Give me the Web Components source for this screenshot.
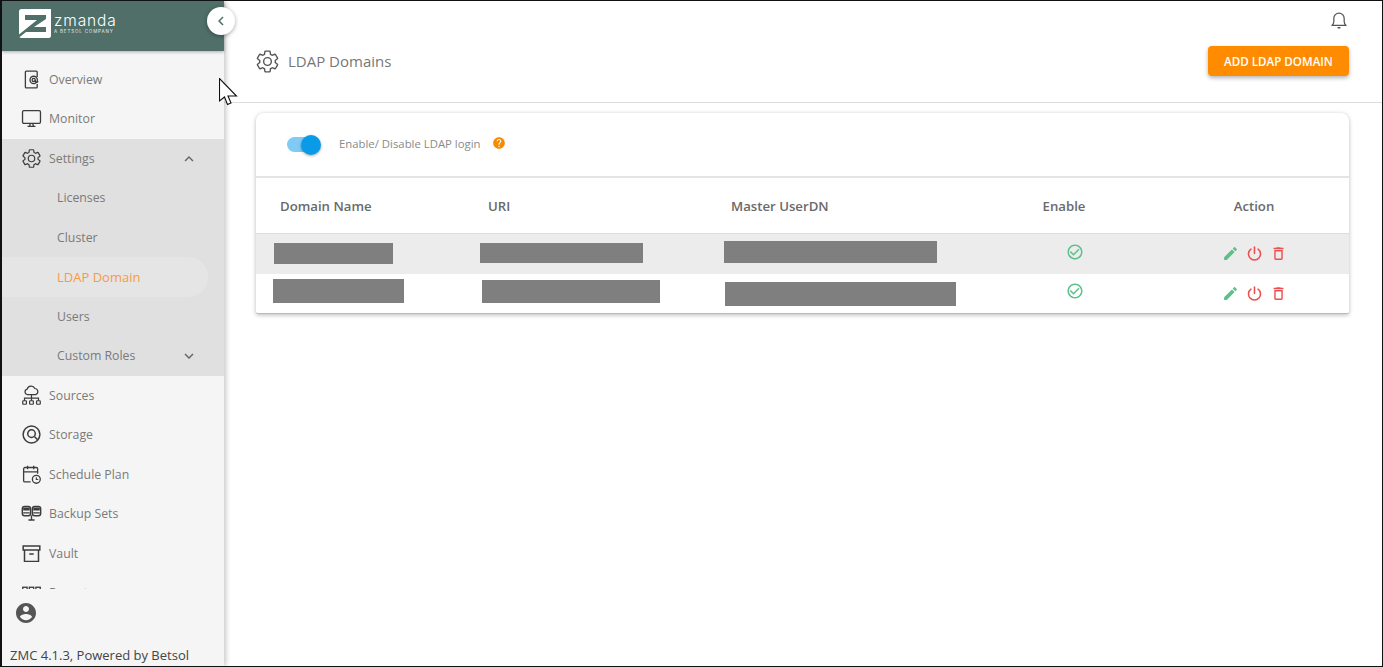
<!DOCTYPE html>
<html lang="en">
<head>
<meta charset="utf-8">
<title>LDAP Domains</title>
<style>
  html, body { margin: 0; height: 100%; overflow: hidden; background: #fff; }
  body { font-family: "Open Sans", "Liberation Sans", sans-serif; }
</style>
</head>
<body>
<app-shell>
  <side-bar slot="side">
    <nav-item icon="overview">Overview</nav-item>
    <nav-item icon="monitor">Monitor</nav-item>
    <nav-group>
      <nav-item icon="gear" chevron="up">Settings</nav-item>
      <nav-item sub>Licenses</nav-item>
      <nav-item sub>Cluster</nav-item>
      <nav-item sub active>LDAP Domain</nav-item>
      <nav-item sub>Users</nav-item>
      <nav-item sub chevron="down">Custom Roles</nav-item>
    </nav-group>
    <nav-item icon="sources">Sources</nav-item>
    <nav-item icon="storage">Storage</nav-item>
    <nav-item icon="schedule">Schedule Plan</nav-item>
    <nav-item icon="backup">Backup Sets</nav-item>
    <nav-item icon="vault">Vault</nav-item>
    <nav-item icon="reports">Reports</nav-item>
  </side-bar>
  <page-header slot="head" title-text="LDAP Domains" action="ADD LDAP DOMAIN"></page-header>
  <ldap-card slot="main"></ldap-card>
</app-shell>

<script>
const ICONS = {
  gear: '<g fill="none" stroke="currentColor" stroke-width="1.35"><path d="M19.43 12.98c.04-.32.07-.64.07-.98 0-.34-.03-.66-.07-.98l2.11-1.65c.19-.15.24-.42.12-.64l-2-3.46c-.09-.16-.26-.25-.44-.25-.06 0-.12.01-.17.03l-2.49 1c-.52-.4-1.08-.73-1.69-.98l-.38-2.65C14.46 2.18 14.25 2 14 2h-4c-.25 0-.46.18-.49.42l-.38 2.65c-.61.25-1.17.59-1.69.98l-2.49-1c-.06-.02-.12-.03-.18-.03-.17 0-.34.09-.43.25l-2 3.46c-.13.22-.07.49.12.64l2.11 1.65c-.04.32-.07.65-.07.98 0 .33.03.66.07.98l-2.11 1.65c-.19.15-.24.42-.12.64l2 3.46c.09.16.26.25.44.25.06 0 .12-.01.17-.03l2.49-1c.52.4 1.08.73 1.69.98l.38 2.65c.03.24.24.42.49.42h4c.25 0 .46-.18.49-.42l.38-2.65c.61-.25 1.17-.59 1.69-.98l2.49 1c.06.02.12.03.18.03.17 0 .34-.09.43-.25l2-3.46c.12-.22.07-.49-.12-.64l-2.11-1.65z"/><circle cx="12" cy="12" r="3.7"/></g>',
  overview: '<g fill="none" stroke="currentColor" stroke-width="1.5"><path d="M6 2.500h11.500a1 1 0 0 1 1 1v5.500M18.500 17v3.500a1 1 0 0 1-1 1H6a1 1 0 0 1-1-1v-17a1 1 0 0 1 1-1"/><circle cx="14.500" cy="12.500" r="1.800"/><circle cx="14.500" cy="12.500" r="4.200"/><path d="M16.300 12.500v1.300a1.500 1.500 0 0 0 3 0"/></g>',
  monitor: '<g fill="none" stroke="currentColor" stroke-width="1.500"><rect x="1.750" y="3" width="20.500" height="14.500" rx="1.500"/><path d="M10.500 17.500l-.5 3M13.500 17.500l.5 3M7.500 21h9"/></g>',
  sources: '<g fill="none" stroke="currentColor" stroke-width="1.400"><path d="M7.500 11a3.200 3.200 0 0 1-.4-6.300A4.600 4.600 0 0 1 15.800 4a3.600 3.600 0 0 1 1 7z"/><path d="M12 11v4M4 18v-3h16v3M12 15v3"/><rect x="2" y="18" width="4.200" height="4" rx=".6"/><rect x="9.900" y="18" width="4.200" height="4" rx=".6"/><rect x="17.800" y="18" width="4.200" height="4" rx=".6"/></g>',
  storage: '<g fill="none" stroke="currentColor" stroke-width="1.700"><circle cx="12" cy="12" r="9.600"/><circle cx="12" cy="11" r="4.300"/><path d="M15.500 14.500l3.500 3.500"/></g>',
  schedule: '<g fill="none" stroke="currentColor" stroke-width="1.500"><path d="M11 20.500H4.500a1.500 1.500 0 0 1-1.500-1.500V5.500A1.500 1.500 0 0 1 4.500 4h13A1.500 1.500 0 0 1 19 5.500V11"/><path d="M3 9h16M7.500 2v4M14.500 2v4"/><circle cx="17.500" cy="17.500" r="4.500"/><path d="M17.500 15v2.700h2.200" stroke-width="1.200"/></g>',
  backup: '<g fill="none" stroke="currentColor" stroke-width="1.600"><path d="M12 14v6M8.500 19.500h7"/><rect x="1.500" y="4" width="9.500" height="10.500" rx="2.500"/><rect x="13" y="4" width="9.500" height="10.500" rx="2.500"/></g><path fill="currentColor" d="M2.500 5h7.500v3.500H2.500zM14 5h7.500v3.500H14zM2.500 10.500h7.500v1.500H2.500zM14 10.500h7.500v1.500H14z"/>',
  vault: '<g fill="none" stroke="currentColor" stroke-width="1.700"><path d="M2.500 3.500h19v4.500h-19zM4 8v13h16V8M9.500 12.500h5"/></g>',
  reports: '<g fill="none" stroke="currentColor" stroke-width="1.500"><rect x="2" y="6" width="5" height="8"/><rect x="9.500" y="6" width="5" height="8"/><rect x="17" y="6" width="5" height="8"/></g>',
  up: '<path fill="currentColor" d="M12 8l-6 6 1.410 1.410L12 10.830l4.590 4.580L18 14z"/>',
  down: '<path fill="currentColor" d="M16.590 8.590L12 13.170 7.410 8.590 6 10l6 6 6-6z"/>',
  left: '<path fill="currentColor" d="M15.410 7.410L14 6l-6 6 6 6 1.410-1.410L10.830 12z"/>',
  user: '<path fill="currentColor" d="M12 2C6.480 2 2 6.480 2 12s4.480 10 10 10 10-4.480 10-10S17.520 2 12 2zm0 3c1.660 0 3 1.340 3 3s-1.340 3-3 3-3-1.340-3-3 1.340-3 3-3zm0 14.200c-2.500 0-4.710-1.280-6-3.220.030-1.990 4-3.080 6-3.080 1.990 0 5.970 1.090 6 3.080-1.290 1.940-3.500 3.220-6 3.220z"/>',
  bell: '<g fill="none" stroke="currentColor" stroke-width="1.500" stroke-linejoin="round"><path d="M3.500 18.500c1.500-1.300 2.300-2.600 2.300-4.800V10a6.200 6.200 0 0 1 12.400 0v3.700c0 2.200.8 3.500 2.300 4.800z"/></g><path fill="currentColor" d="M10 20.500h4a2 2 0 0 1-4 0z"/>',
  check: '<path fill="currentColor" d="M16.590 7.580L10 14.170l-3.590-3.580L5 12l5 5 8-8zM12 2C6.480 2 2 6.480 2 12s4.480 10 10 10 10-4.480 10-10S17.520 2 12 2zm0 18c-4.420 0-8-3.580-8-8s3.580-8 8-8 8 3.580 8 8-3.580 8-8 8z"/>',
  edit: '<path fill="currentColor" d="M3 17.250V21h3.750L17.810 9.940l-3.750-3.750L3 17.250zM20.710 7.040c.39-.39.39-1.020 0-1.410l-2.340-2.340c-.39-.39-1.020-.39-1.410 0l-1.830 1.830 3.750 3.750 1.830-1.830z"/>',
  power: '<g fill="none" stroke="currentColor" stroke-width="2.200" stroke-linecap="round"><path d="M12 3v9"/><path d="M7 5.800a8.500 8.500 0 1 0 10 0"/></g>',
  trash: '<path fill="currentColor" d="M6 19c0 1.100.9 2 2 2h8c1.100 0 2-.9 2-2V7H6v12zM8 9h8v10H8V9zm7.500-5l-1-1h-5l-1 1H5v2h14V4z"/>',
  help: '<path fill="currentColor" d="M12 2C6.480 2 2 6.480 2 12s4.480 10 10 10 10-4.480 10-10S17.520 2 12 2zm1 17h-2v-2h2v2zm2.070-7.750l-.9.920C13.450 12.900 13 13.500 13 15h-2v-.5c0-1.100.45-2.100 1.170-2.830l1.240-1.260c.37-.36.59-.86.59-1.410 0-1.100-.9-2-2-2s-2 .9-2 2H8c0-2.210 1.790-4 4-4s4 1.790 4 4c0 .88-.36 1.680-.93 2.250z"/>'
};

class SvgIcon extends HTMLElement {
  connectedCallback() {
    const size = this.getAttribute('size') || 22;
    this.attachShadow({ mode: 'open' }).innerHTML = `
      <style>
        :host { display: inline-flex; flex: none; width: ${size}px; height: ${size}px; }
        svg { width: 100%; height: 100%; display: block; }
      </style>
      <svg viewBox="0 0 24 24">${ICONS[this.getAttribute('name')] || ''}</svg>`;
  }
}
customElements.define('svg-icon', SvgIcon);

class AppShell extends HTMLElement {
  constructor() {
    super();
    this.attachShadow({ mode: 'open' }).innerHTML = `
      <style>
        :host {
          display: flex; box-sizing: border-box; height: 667px; overflow: hidden; position: relative;
          border-style: solid; border-color: #111; border-width: 1px 1px 1px 2px;
        }
        .main { flex: 1; min-width: 0; display: flex; flex-direction: column; }
        .body { padding: 10px 33px 0 32px; }
        svg.cursor { position: absolute; left: 217px; top: 77px; z-index: 5; }
      </style>
      <slot name="side"></slot>
      <div class="main">
        <slot name="head"></slot>
        <div class="body"><slot name="main"></slot></div>
      </div>
      <svg class="cursor" width="19" height="28" viewBox="0 0 19 28">
        <path d="M.5 .5V23L5.500 19 8.500 26.500 12 25 9 18H17.500z" fill="#fff" stroke="#111" stroke-width="1.100"/>
      </svg>`;
  }
}
customElements.define('app-shell', AppShell);

class SideBar extends HTMLElement {
  constructor() {
    super();
    this.attachShadow({ mode: 'open' }).innerHTML = `
      <style>
        :host {
          display: flex; flex-direction: column; flex: none; width: 222px; height: 665px;
          background: #f5f5f5; position: relative; z-index: 2;
          box-shadow: 2px 0 5px rgba(0,0,0,.22);
        }
        .brand {
          flex: none; height: 50px; background: #4f6f68; display: flex; align-items: flex-start;
          gap: 3px; padding-left: 17px; box-sizing: border-box; box-shadow: 0 1px 3px rgba(0,0,0,.3);
          color: #fff; position: relative;
        }
        .brand svg { display: block; margin-top: 8px; }
        .word { display: flex; flex-direction: column; font-family: Inter, "Noto Sans", sans-serif; padding-top: 12px; }
        .word b { font-weight: 300; font-size: 15.500px; line-height: 16px; letter-spacing: .85px; }
        .word small { font-size: 4.500px; line-height: 6px; letter-spacing: .85px; opacity: .85; white-space: nowrap; }
        .toggle {
          position: absolute; left: 205px; top: 6px; width: 28px; height: 28px; border-radius: 50%;
          background: #fff; box-shadow: 0 1px 4px rgba(0,0,0,.35); color: #4f6f68;
          display: flex; align-items: center; justify-content: center;
        }
        .nav { flex: 1; min-height: 0; overflow: hidden; padding-top: 8.500px; }
        .foot { flex: none; height: 77px; color: #444; position: relative; }
        .foot svg-icon { color: #555; position: absolute; left: 12px; top: 12px; }
        .foot p { margin: 0; position: absolute; left: 8px; top: 56px; font-size: 13px; line-height: 20px; white-space: nowrap; }
      </style>
      <div class="brand">
        <svg width="32" height="29" viewBox="0 0 32 29">
          <path fill="#fff" d="M2.500 0H32V26.500A2.500 2.500 0 0 1 29.500 29H2.500A2.500 2.500 0 0 1 0 26.500V2.500A2.500 2.500 0 0 1 2.500 0z"/>
          <path fill="#4f6f68" d="M6 6H27V10L15 18H27V23H7L0 28.500V25.500L18 11H6z"/>
        </svg>
        <div class="word"><b>zmanda</b><small>A BETSOL COMPANY</small></div>
        <div class="toggle"><svg-icon name="left" size="18"></svg-icon></div>
      </div>
      <div class="nav"><slot></slot></div>
      <div class="foot">
        <svg-icon name="user" size="24"></svg-icon>
        <p>ZMC 4.1.3, Powered by Betsol</p>
      </div>`;
  }
}
customElements.define('side-bar', SideBar);

class NavGroup extends HTMLElement {
  constructor() {
    super();
    this.attachShadow({ mode: 'open' }).innerHTML = `
      <style>:host { display: block; background: #e0e0e0; }</style><slot></slot>`;
  }
}
customElements.define('nav-group', NavGroup);

class NavItem extends HTMLElement {
  connectedCallback() {
    const icon = this.getAttribute('icon');
    const chevron = this.getAttribute('chevron');
    this.attachShadow({ mode: 'open' }).innerHTML = `
      <style>
        :host {
          display: flex; align-items: center; box-sizing: border-box; height: 39.500px;
          padding-left: 19px; gap: 7px; font-size: 12.300px; color: #7a7a7a; position: relative;
        }
        :host([sub]) { padding-left: 55px; }
        :host([active]) { color: #f79a45; font-size: 13px; font-weight: 500; }
        :host([active])::before {
          content: ""; position: absolute; left: 0; top: 0; bottom: 0; width: 206px;
          background: #e5e5e5; border-radius: 0 20px 20px 0;
        }
        .ic { color: #3c3c3c; }
        .lb { position: relative; white-space: nowrap; }
        .chev { position: absolute; left: 178px; top: 11px; color: #666; }
      </style>
      ${icon ? `<svg-icon class="ic" name="${icon}" size="21"></svg-icon>` : ''}
      <span class="lb"><slot></slot></span>
      ${chevron ? `<svg-icon class="chev" name="${chevron}" size="18"></svg-icon>` : ''}`;
  }
}
customElements.define('nav-item', NavItem);

class PageHeader extends HTMLElement {
  connectedCallback() {
    this.attachShadow({ mode: 'open' }).innerHTML = `
      <style>
        :host { display: block; flex: none; height: 102px; box-sizing: border-box; border-bottom: 1px solid #ddd; }
        .top { display: flex; justify-content: flex-end; padding: 9px 33px 0 0; height: 40px; box-sizing: border-box; color: #555; }
        .row { display: flex; align-items: center; height: 40px; padding: 0 33px 0 31px; gap: 8px; }
        .row h1 { margin: 0; flex: 1; font-size: 15px; font-weight: 400; color: #777; }
        .row svg-icon { color: #555; }
        button {
          font: 600 11.600px "Open Sans", sans-serif; color: #fff; background: #ff8c00; border: 0; border-radius: 4px;
          width: 141px; height: 30px; padding: 0; box-shadow: 0 2px 4px rgba(0,0,0,.3);
        }
      </style>
      <div class="top"><svg-icon name="bell" size="20"></svg-icon></div>
      <div class="row">
        <svg-icon name="gear" size="25"></svg-icon>
        <h1>${this.getAttribute('title-text')}</h1>
        <button>${this.getAttribute('action')}</button>
      </div>`;
  }
}
customElements.define('page-header', PageHeader);

class RedactedBar extends HTMLElement {
  connectedCallback() {
    const [x, y, w, h] = this.getAttribute('box').split(',');
    this.attachShadow({ mode: 'open' }).innerHTML = `
      <style>
        :host { display: block; background: #7f7f7f; margin: ${y}px 0 0 ${x}px; width: ${w}px; height: ${h}px; }
      </style>`;
  }
}
customElements.define('redacted-bar', RedactedBar);

class LdapRow extends HTMLElement {
  connectedCallback() {
    const boxes = this.getAttribute('boxes').split(' ');
    this.attachShadow({ mode: 'open' }).innerHTML = `
      <style>
        :host {
          display: grid; grid-template-columns: 208px 243px 262px 190px 190px; height: 39.500px; overflow: hidden;
        }
        :host([shade]) { background: #ececec; }
        .mid { display: flex; align-items: center; justify-content: center; gap: 7px; }
        .ok { color: #5cc08a; padding-left: 21px; margin-top: -4px; }
        .edit { color: #5cc08a; }
        .del { color: #ec5050; }
      </style>
      ${boxes.map(b => `<div><redacted-bar box="${b}"></redacted-bar></div>`).join('')}
      <div class="mid ok"><svg-icon name="check" size="18"></svg-icon></div>
      <div class="mid">
        <svg-icon class="edit" name="edit" size="17"></svg-icon>
        <svg-icon class="del" name="power" size="17"></svg-icon>
        <svg-icon class="del" name="trash" size="17"></svg-icon>
      </div>`;
  }
}
customElements.define('ldap-row', LdapRow);

class LdapCard extends HTMLElement {
  constructor() {
    super();
    this.attachShadow({ mode: 'open' }).innerHTML = `
      <style>
        :host {
          display: block; background: #fff; border-radius: 8px 8px 2px 2px;
          box-shadow: 0 1px 4px rgba(0,0,0,.28); border-bottom: 1px solid #bbb; box-sizing: border-box;
        }
        .bar { display: flex; align-items: center; height: 65px; border-bottom: 2px solid #e4e4e4; padding-left: 31px; box-sizing: border-box; }
        .sw { position: relative; width: 34px; height: 22px; display: flex; align-items: center; }
        .track { width: 30px; height: 15px; border-radius: 8px; background: #7fcbf5; }
        .knob { position: absolute; left: 14px; top: 1px; width: 20px; height: 20px; border-radius: 50%; background: #0a9be8; box-shadow: 0 1px 3px rgba(0,0,0,.35); }
        .lbl { font-size: 11.350px; color: #8a8a8a; margin-left: 18px; margin-top: -2px; }
        .help { color: #f78a00; margin-left: 11px; margin-top: -3px; }
        .head {
          display: grid; grid-template-columns: 208px 243px 262px 190px 190px; height: 56px; align-items: center;
          font-weight: 600; font-size: 13.200px; color: #6a6a6a; border-bottom: 1px solid #ddd; box-sizing: border-box;
        }
        .head div:nth-child(-n+3) { padding-left: 24px; }
        .head div:nth-child(n+4) { text-align: center; }
      </style>
      <div class="bar">
        <div class="sw"><div class="track"></div><div class="knob"></div></div>
        <span class="lbl">Enable/ Disable LDAP login</span>
        <svg-icon class="help" name="help" size="14"></svg-icon>
      </div>
      <div class="head">
        <div>Domain Name</div><div>URI</div><div>Master UserDN</div><div>Enable</div><div>Action</div>
      </div>
      <ldap-row shade boxes="18,9,119,21 16,9,163,20 17,7,213,22"></ldap-row>
      <ldap-row boxes="17,5,131,24 18,6,178,23 18,8,231,24"></ldap-row>`;
  }
}
customElements.define('ldap-card', LdapCard);
</script>
</body>
</html>
